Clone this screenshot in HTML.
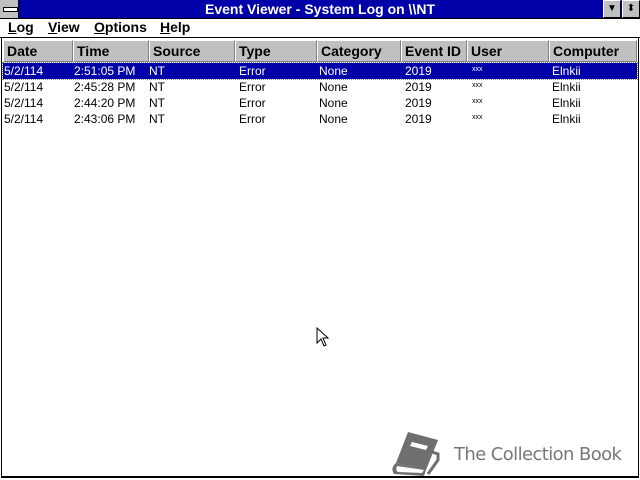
<!DOCTYPE html>
<html><head><meta charset="utf-8"><style>
*{margin:0;padding:0;box-sizing:border-box}
body{width:640px;height:480px;background:#fff;position:relative;overflow:hidden;font-family:"Liberation Sans",sans-serif}
.title{position:absolute;left:0;top:0;width:640px;height:19px;background:#0000a8;border-bottom:1px solid #000}
.title .t{position:absolute;left:0;width:640px;top:1px;text-align:center;color:#fff;font-weight:bold;font-size:14px}
.sys{position:absolute;left:0;top:0;width:19px;height:18px;background:#c0c0c0;border-right:1px solid #000}
.sys:after{content:"";position:absolute;left:3px;top:7px;width:13px;height:3px;background:#fff;border:1px solid #000}
.btn{position:absolute;top:0;width:18px;height:18px;background:#c0c0c0;border:1px solid #000;border-top-color:#fff;border-left-color:#fff;font-size:10px;text-align:center;line-height:16px}
.menu{position:absolute;top:19px;left:0;width:640px;height:19px;border-bottom:1px solid #000;font-size:14px;font-weight:bold}
.menu span{position:absolute;top:0}
.menu u{text-decoration:underline}
.win{position:absolute;left:1px;top:38px;width:638px;height:440px;border-left:1px solid #000;border-right:1px solid #000;border-bottom:2px solid #000}
.hdr{position:absolute;top:40px;height:22px;background:#c0c0c0;border:1px solid #fff;border-right-color:#808080;border-bottom-color:#808080;font-weight:bold;font-size:14px;padding:2px 0 0 3px}
.row{position:absolute;left:3px;width:634px;height:16px;font-size:12px}
.row span{position:absolute;top:1px}
.row span.x{font-size:7px;top:3px}
.sel{background:#0000a8;color:#fff;outline:1px dotted #888}
</style></head><body>
<div class="title"><div class="t">Event Viewer - System Log on \\NT</div></div>
<div class="sys"></div>
<div class="btn" style="left:603px">▼</div>
<div class="btn" style="left:622px">⬍</div>
<div class="menu">
<span style="left:8px"><u>L</u>og</span>
<span style="left:48px"><u>V</u>iew</span>
<span style="left:94px"><u>O</u>ptions</span>
<span style="left:160px"><u>H</u>elp</span>
</div>
<div class="win"></div>
<div class="hdr" style="left:3px;width:70px">Date</div>
<div class="hdr" style="left:73px;width:76px">Time</div>
<div class="hdr" style="left:149px;width:86px">Source</div>
<div class="hdr" style="left:235px;width:82px">Type</div>
<div class="hdr" style="left:317px;width:84px">Category</div>
<div class="hdr" style="left:401px;width:66px">Event ID</div>
<div class="hdr" style="left:467px;width:82px">User</div>
<div class="hdr" style="left:549px;width:88px">Computer</div>

<div class="row sel" style="top:63px"><span style="left:1px">5/2/114</span><span style="left:71px">2:51:05 PM</span><span style="left:146px">NT</span><span style="left:236px">Error</span><span style="left:316px">None</span><span style="left:402px">2019</span><span class="x" style="left:469px">xxx</span><span style="left:549px">Elnkii</span></div>
<div class="row" style="top:79px"><span style="left:1px">5/2/114</span><span style="left:71px">2:45:28 PM</span><span style="left:146px">NT</span><span style="left:236px">Error</span><span style="left:316px">None</span><span style="left:402px">2019</span><span class="x" style="left:469px">xxx</span><span style="left:549px">Elnkii</span></div>
<div class="row" style="top:95px"><span style="left:1px">5/2/114</span><span style="left:71px">2:44:20 PM</span><span style="left:146px">NT</span><span style="left:236px">Error</span><span style="left:316px">None</span><span style="left:402px">2019</span><span class="x" style="left:469px">xxx</span><span style="left:549px">Elnkii</span></div>
<div class="row" style="top:111px"><span style="left:1px">5/2/114</span><span style="left:71px">2:43:06 PM</span><span style="left:146px">NT</span><span style="left:236px">Error</span><span style="left:316px">None</span><span style="left:402px">2019</span><span class="x" style="left:469px">xxx</span><span style="left:549px">Elnkii</span></div>

<svg style="position:absolute;left:316px;top:327px" width="14" height="22" viewBox="0 0 14 22"><path d="M1 1 L1 16 L5 12 L8 19 L10 18 L7 11 L12 11 Z" fill="#fff" stroke="#000" stroke-width="1"/></svg>

<svg style="position:absolute;left:388px;top:430px" width="54" height="47" viewBox="0 0 54 47">
<path d="M20 2 L50 10 L38 40 L8 33 Z" fill="#6f6f6f"/>
<path d="M8 33 Q2 38 6 44 L36 46 L38 40 Z" fill="#6f6f6f"/>
<path d="M9 36 Q7 40 10 42 L34 43 L36 40 Z" fill="#fff"/>
<path d="M44 22 L50 24 L50 30 L40 44" fill="none" stroke="#6f6f6f" stroke-width="3"/>
<path d="M24 12 L40 16 L38 20 L22 16 Z" fill="#fff"/>
</svg>
<div style="position:absolute;left:454px;top:444px;font-size:18px;color:#777;font-family:'DejaVu Sans',sans-serif;letter-spacing:-0.6px;white-space:nowrap">The Collection Book</div>
</body></html>
